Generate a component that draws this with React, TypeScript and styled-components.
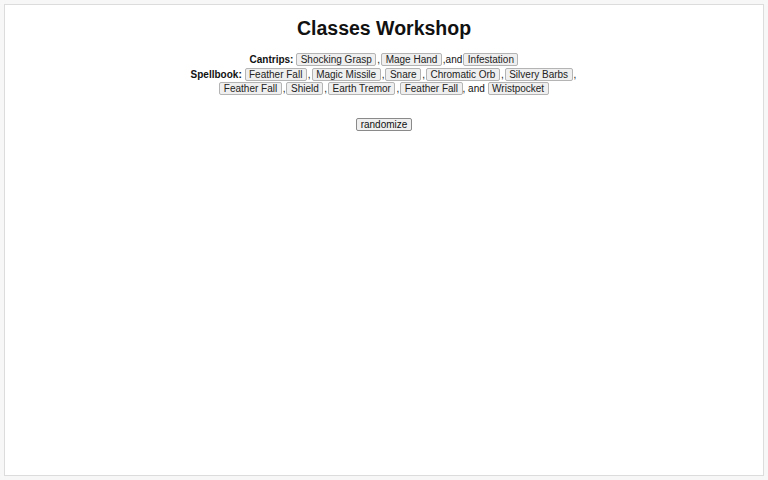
import styled, { createGlobalStyle } from "styled-components";
import { useState } from "react";

const GlobalStyle = createGlobalStyle`
  html, body {
    margin: 0;
    padding: 0;
    background: #f7f7f7;
    font-family: "Liberation Sans", Arial, sans-serif;
  }
`;

const Frame = styled.main`
  box-sizing: border-box;
  margin: 4px;
  width: 760px;
  height: 472px;
  background: #ffffff;
  border: 1px solid #dcdcdc;
  color: #111;
  text-align: center;
`;

const Title = styled.h1`
  margin: 0;
  padding-top: 10px;
  font-size: 19.5px;
  line-height: 26px;
  font-weight: bold;
`;

const Spells = styled.section`
  margin-top: 12px;
  font-size: 10px;
  line-height: 14.5px;
`;

const Line = styled.p<{ width: number }>`
  margin: 0 auto;
  width: ${({ width }) => width}px;
`;

const Label = styled.b`
  font-weight: bold;
`;

const Sep = styled.span`
  padding: 0 1px;
`;

const SpellButton = styled.button`
  font-family: inherit;
  font-size: 10px;
  line-height: 11px;
  padding: 0 3.5px;
  margin: 0;
  color: #222;
  background: #efefef;
  border: 1px solid #b4b4b4;
  border-radius: 2px;
  vertical-align: baseline;
`;

const Actions = styled.div`
  margin-top: 17px;
`;

const RandomButton = styled(SpellButton)`
  padding: 0 4px;
  color: #111;
  border-color: #8a8a8a;
`;

const pool = [
  "Shocking Grasp",
  "Mage Hand",
  "Infestation",
  "Feather Fall",
  "Magic Missile",
  "Snare",
  "Chromatic Orb",
  "Silvery Barbs",
  "Shield",
  "Earth Tremor",
  "Wristpocket",
];

// joins spell buttons as "a, b, c, and d"
function SpellList({ spells, tight }: { spells: string[]; tight?: boolean }) {
  return (
    <>
      {spells.map((s, i) => (
        <span key={i}>
          <SpellButton>{s}</SpellButton>
          {i < spells.length - 2 && (
            <>
              <Sep>,</Sep>
              <wbr />
            </>
          )}
          {i === spells.length - 2 && (tight ? <Sep>,and</Sep> : ", and ")}
        </span>
      ))}
    </>
  );
}

export default function App() {
  const [cantrips, setCantrips] = useState(["Shocking Grasp", "Mage Hand", "Infestation"]);
  const [book, setBook] = useState([
    "Feather Fall",
    "Magic Missile",
    "Snare",
    "Chromatic Orb",
    "Silvery Barbs",
    "Feather Fall",
    "Shield",
    "Earth Tremor",
    "Feather Fall",
    "Wristpocket",
  ]);

  const randomize = () => {
    const pick = () => pool[Math.floor(Math.random() * pool.length)];
    setCantrips(cantrips.map(pick));
    setBook(book.map(pick));
  };

  return (
    <>
      <GlobalStyle />
      <Frame>
        <Title>Classes Workshop</Title>
        <Spells>
          <Line width={600}>
            <Label>Cantrips:</Label> <SpellList spells={cantrips} tight />
          </Line>
          <Line width={390}>
            <Label>Spellbook:</Label> <SpellList spells={book} />
          </Line>
        </Spells>
        <Actions>
          <RandomButton onClick={randomize}>randomize</RandomButton>
        </Actions>
      </Frame>
    </>
  );
}
